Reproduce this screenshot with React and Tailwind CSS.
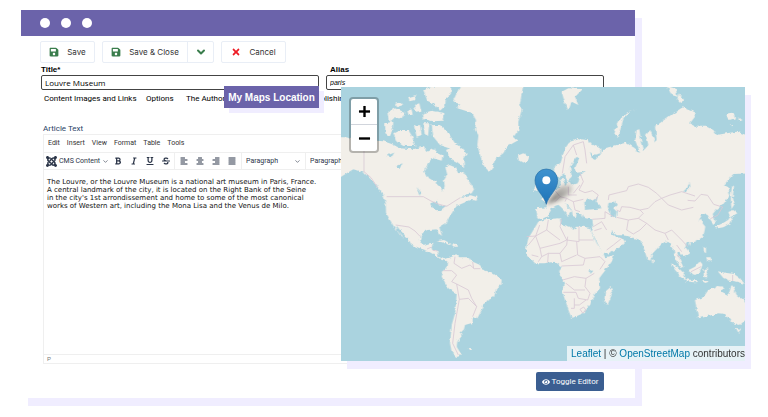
import React, { useState } from 'react';
import {
  FaSave,
  FaTimes,
  FaEye,
  FaBold,
  FaItalic,
  FaUnderline,
  FaStrikethrough,
  FaAlignLeft,
  FaAlignCenter,
  FaAlignRight,
  FaAlignJustify,
} from 'react-icons/fa';
import { SiJoomla } from 'react-icons/si';
import { ChevronDown, Plus, Minus } from 'lucide-react';

const menus = ['Edit', 'Insert', 'View', 'Format', 'Table', 'Tools'];

const formatButtons = [
  { label: 'Bold', Icon: FaBold },
  { label: 'Italic', Icon: FaItalic },
  { label: 'Underline', Icon: FaUnderline },
  { label: 'Strikethrough', Icon: FaStrikethrough },
];

const alignButtons = [
  { label: 'Align left', Icon: FaAlignLeft },
  { label: 'Align center', Icon: FaAlignCenter },
  { label: 'Align right', Icon: FaAlignRight },
  { label: 'Justify', Icon: FaAlignJustify },
];

const WorldMap = () => (
  <svg
    className="block w-full h-full"
    viewBox="0 0 1212 822"
    preserveAspectRatio="xMidYMid slice"
    role="img"
    aria-label="World map"
  >
    <defs>
      <filter id="coast" x="-5%" y="-5%" width="110%" height="110%">
        <feTurbulence type="fractalNoise" baseFrequency="0.08" numOctaves="2" seed="4" result="noise" />
        <feDisplacementMap in="SourceGraphic" in2="noise" scale="11" xChannelSelector="R" yChannelSelector="G" />
      </filter>
      <filter id="soft" x="-50%" y="-50%" width="200%" height="200%">
        <feGaussianBlur stdDeviation="6" />
      </filter>
      <linearGradient id="pin" x1="0" y1="0" x2="0" y2="1">
        <stop offset="0" stopColor="#3f93cf" />
        <stop offset="1" stopColor="#1f74b8" />
      </linearGradient>
      <linearGradient id="pinShadow" x1="0" y1="1" x2="1" y2="0">
        <stop offset="0" stopColor="#000" stopOpacity="0.55" />
        <stop offset="1" stopColor="#000" stopOpacity="0.1" />
      </linearGradient>
    </defs>
    <rect width="1212" height="822" fill="#aad3df" />

    <g filter="url(#coast)" fill="#f2efe9" strokeLinejoin="round">
      {/* North America, Greenland, Iceland */}
      <g transform="translate(-3 -21)">
        <path d="M-20 172L20 172 45 182 75 188 110 182 130 184 155 192 180 205 215 208 250 200 262 215 285 205 290 225 275 240 262 255 252 272 262 292 285 305 300 318 308 335 314 318 312 300 322 285 316 262 328 255 345 262 355 280 372 275 380 295 395 315 402 328 395 340 375 345 360 352 392 346 412 352 410 362 392 360 372 368 350 378 340 392 328 412 318 430 298 442 306 468 298 462 290 448 262 450 245 458 240 480 250 495 268 490 280 488 274 502 277 510 292 512 296 530 312 538 328 534 325 544 305 540 285 526 262 512 240 505 215 495 205 478 180 450 168 435 172 452 192 476 185 472 162 440 150 420 138 398 137 370 130 345 112 320 95 300 72 278 40 268 20 280 -20 305Z" />
        <path d="M362 15L345 50 338 65 360 72 352 85 395 98 408 120 405 150 415 165 412 195 420 225 432 258 448 276 458 262 465 238 490 220 500 200 532 182 520 172 535 150 535 125 545 90 540 70 550 15Z" />
        <path d="M530 228L550 220 568 228 565 242 548 248 534 240Z" />
        <path d="M275 135L300 135 325 160 345 190 365 205 380 222 370 235 372 262 350 245 330 235 318 210 330 205 300 195 280 170Z" />
        <path d="M135 130L160 125 158 150 148 168 136 160Z" />
        <path d="M160 160L180 150 205 150 218 172 225 198 190 198 170 185Z" />
        <path d="M145 95L165 85 195 100 185 118 165 112 150 125Z" />
        <path d="M165 72L182 65 190 76 172 82ZM205 52L228 45 225 60 208 64ZM222 76L238 70 244 95 230 98ZM202 92L215 88 218 104 206 106Z" />
        <path d="M250 30L275 20 335 15 332 42 318 55 315 78 300 92 282 72 262 62Z" />
        <path d="M248 100L275 92 310 98 308 122 280 124 252 118Z" />
        <path d="M222 138L240 135 245 165 230 170ZM250 130L268 130 264 168 254 162ZM286 216L308 226 305 242 284 236Z" />
      </g>

      {/* South America and the Caribbean */}
      <g transform="translate(-3 369)">
        <path d="M322 146L345 136 358 142 385 142 392 152 420 165 425 178 455 188 485 206 484 222 468 238 462 262 435 275 428 295 412 325 398 322 398 338 375 345 372 358 362 368 365 378 352 395 350 410 365 435 352 441 335 425 330 400 335 345 345 310 350 252 325 235 305 200 310 182 320 170Z" />
        <path d="M290 94L312 90 334 102 328 105 306 97ZM336 103L354 106 350 111 338 109ZM385 415L396 414 394 420 386 420Z" />
      </g>

      {/* Europe and Asia */}
      <g transform="translate(597 -21)">
        <path d="M42 262L62 248 75 205 90 185 120 175 145 178 150 190 180 205 182 220 160 225 150 215 155 235 165 240 180 225 195 205 230 195 258 188 285 205 290 215 300 218 285 180 290 150 298 148 302 175 312 210 325 195 318 165 330 150 345 185 350 180 345 140 365 125 400 100 428 82 462 95 465 110 450 130 470 140 500 140 520 150 530 165 560 160 590 155 640 170 640 280 580 282 552 315 565 322 570 345 548 375 528 390 518 402 527 425 520 432 508 415 500 400 486 405 478 418 496 440 490 470 465 485 440 490 435 500 447 515 445 525 430 532 418 515 412 520 420 540 430 562 424 564 405 530 400 505 385 485 375 485 362 495 338 520 330 542 322 538 308 495 300 480 285 475 262 468 245 466 230 466 212 450 215 460 228 470 250 478 255 485 240 502 205 520 190 522 180 505 165 475 155 455 160 440 157 418 130 414 124 400 110 398 108 412 98 408 95 390 85 378 75 368 80 378 96 394 88 398 84 412 80 398 62 380 55 374 45 382 35 386 23 408 5 418 -8 412 -12 385 20 382 17 365 3 358 10 353 20 348 45 330 60 320 64 298 72 298 75 318 84 310 78 292 70 280 60 292 44 286Z" />
        <path d="M-15 315L-10 312 -8 332 -18 336ZM5 280L18 282 14 300 26 325 22 342 4 346 8 320Z" />
        <path d="M65 35L85 25 128 28 105 50 115 75 95 65 85 92 72 60ZM290 88L270 95 250 118 242 145 236 172 223 162 233 125 260 98ZM380 18L408 26 412 50 395 45ZM416 40L432 60 420 66 412 56ZM556 105L580 100 585 115 568 120ZM590 112L608 120 600 124ZM570 135L582 136 578 142Z" />
        <path d="M576 318L582 322 578 352 584 372 574 388 572 350ZM565 396L580 390 592 400 578 408 570 412ZM570 412L578 415 572 430 550 442 534 445 530 438 548 430 564 420ZM524 438L532 438 530 448Z" />
      </g>

      {/* Africa, Oceania */}
      <g transform="translate(597 369)">
        <path d="M-5 35L15 28 60 25 63 42 90 50 100 60 108 50 130 50 150 54 155 68 170 100 190 130 195 142 222 135 215 155 185 195 178 205 180 235 162 255 150 285 130 310 95 325 85 300 68 245 75 220 60 195 58 180 65 170 45 155 10 160 -15 160 -43 130 -40 105 -35 85 -20 60Z" />
        <path d="M213 230L217 250 203 284 193 280 195 245ZM334 146L342 154 336 160Z" />
        <path d="M393 160L410 168 430 188 438 208 425 202 405 180ZM436 208L458 210 478 216 460 217 438 214ZM484 212L510 214 496 219ZM446 180L465 170 478 155 487 165 480 187 465 195 450 190ZM490 178L508 175 496 186 504 202 492 202ZM490 108L498 112 498 130 492 126ZM498 142L512 142 514 155 502 153ZM446 96L454 94 450 108Z" />
        <path d="M533 184L555 188 582 192 600 205 614 222 590 215 570 212 550 204Z" />
        <path d="M465 270L490 262 505 240 525 235 530 228 550 230 545 245 565 255 576 222 590 255 612 270 625 290 622 325 600 345 575 338 555 312 535 310 505 318 475 325 470 300ZM587 354L603 356 595 372Z" />
      </g>

      {/* inland seas */}
      <g fill="#aad3df" transform="translate(492 129)">
        <path d="M238 215L250 203 262 212 275 203 272 215 290 235 265 238 240 240Z" />
        <path d="M312 215L330 215 335 225 325 235 335 245 332 264 318 262 315 245 308 230Z" />
        <path d="M200 165L190 150 200 140 195 110 215 80 222 85 210 115 215 128 240 125 225 135 218 160 195 168Z" />
        <path d="M534 185L548 172 554 155 556 170 542 186ZM254 420L264 424 256 432Z" />
      </g>
      <g fill="#aad3df" transform="translate(-3 -21)">
        <path d="M138 228L162 218 155 232ZM168 258L188 250 180 264ZM230 322L242 335 240 348ZM268 370L290 362 298 380 320 376 300 392 282 388Z" />
      </g>
    </g>

    {/* country borders */}
    <g fill="none" stroke="#d9c9d5" strokeWidth="2.5" strokeLinejoin="round">
      <path d="M69 164V254L90 272 110 302M137 329H247L270 342 288 350 317 358 345 340 358 332M164 414L204 420 222 432 237 448M258 486L272 480M275 490L290 492" />
      <path d="M342 509L339 529 362 544 387 534M307 551L332 551 347 564 332 584 347 591 382 609 392 634 407 659 395 689M347 591L355 637 342 709 335 769 352 804M355 637L382 634 407 659M387 534L400 545 418 545M395 525L398 545" />
      <g transform="translate(492 129)">
        <path d="M172 130L180 80 205 45 235 35 240 60 245 100M205 45L215 75M225 130L235 155 222 180 240 188 262 182 280 195 272 210M190 170V195L215 195M150 182L165 200 185 205 205 215 235 208M205 190L225 165M185 205L180 215M205 215L210 240 225 245M165 200L150 215" />
        <path d="M310 210L312 195 340 188 365 182 370 170 400 162 430 172 455 190 470 205 450 215 430 235 405 240 375 232 350 230 345 245 335 240M470 205L495 195 530 185 570 198M470 205L490 225 530 240 565 232M300 245L325 260M262 268L300 265 300 245M335 262L370 270 400 265 415 250 405 240M370 270L365 300 385 312M400 265L425 280 405 300 385 312M425 280L450 300 480 310 500 300M480 310L490 330M500 300L515 315 530 330 548 350M515 345L530 365M265 290L290 275 305 300M268 302L290 295M305 360L325 345 350 325M104 285L92 318 65 320M130 270L125 300 165 330M125 300L92 318 105 355 165 340 185 330 165 290 170 268M185 330L222 335V290M222 330H265M92 318L70 345" />
        <path d="M105 355L110 380 130 370 165 370 185 345 188 320M215 335L218 375 240 385 285 380M165 370L170 395 215 375M240 385L235 405 170 408M285 380L300 395 285 418M130 370L128 398M110 380L100 395M80 375L100 380" />
      </g>
      <path d="M665 579L700 569 735 574 760 559M735 574L732 599 747 619 740 639M675 589L700 609 732 609M667 616H705L712 634 740 639M690 664H700V634M700 654L715 654 735 639M717 667L728 660 735 670 725 678ZM1007 504L1020 514M1050 554L1080 539M1175 564V582" />
      <path d="M1040 340L1062 342 1080 322 1100 325 1118 352 1145 360 1130 385 1108 395" />
    </g>

    {/* marker */}
    <path d="M616 352L646 310Q664 288 690 292Q700 304 684 322Q660 340 616 352Z" fill="url(#pinShadow)" filter="url(#soft)" />
    <path d="M616 352C610 326 582 310 582 280A34 34 0 0 1 650 280C650 310 622 326 616 352Z" fill="url(#pin)" stroke="#2a6fa5" strokeWidth="2" />
    <circle cx="616" cy="280" r="12" fill="#fff" />
  </svg>
);

const MapPanel = () => (
  <div className="absolute top-[77px] left-[320px] -right-[110px] h-[274px] bg-[#aad3df] shadow-[6px_8px_0_#f0edff]">
    <WorldMap />
    <div className="absolute top-[10px] left-2 flex flex-col rounded-sm border-2 border-black/25 bg-clip-padding bg-white">
      <button className="w-[26px] h-[26px] flex items-center justify-center border-b border-gray-300" aria-label="Zoom in">
        <Plus size={19} strokeWidth={3} strokeLinecap="butt" />
      </button>
      <button className="w-[26px] h-[26px] flex items-center justify-center" aria-label="Zoom out">
        <Minus size={19} strokeWidth={3} strokeLinecap="butt" />
      </button>
    </div>
    <div className="absolute right-0 bottom-0 h-[15px] pl-1 bg-white/70 text-[10px] leading-[15px] text-[#333] whitespace-nowrap">
      <a href="#leaflet" className="text-[#0078a8]">Leaflet</a> | ©{' '}
      <a href="#osm" className="text-[#0078a8]">OpenStreetMap</a> contributors
    </div>
  </div>
);

const ToolButton = ({ label, Icon }) => (
  <button className="w-4 h-4 flex items-center justify-center" aria-label={label}>
    <Icon size={8} />
  </button>
);

const App = () => {
  const [title, setTitle] = useState('Louvre Museum');
  const [alias, setAlias] = useState('paris');

  return (
    <div className="min-h-screen bg-white pt-[10px] pl-[21px] pr-[133px] overflow-hidden font-['Liberation_Sans',sans-serif] text-black">
      <main className="relative bg-white shadow-[7px_8px_0_#f0edff] pb-[7px]">
        <div className="h-[26px] bg-[#6b63aa] flex items-center gap-[11px] pl-[19px]">
          <span className="w-[10px] h-[10px] rounded-full bg-white" />
          <span className="w-[10px] h-[10px] rounded-full bg-white" />
          <span className="w-[10px] h-[10px] rounded-full bg-white" />
        </div>

        <div className="pl-5 pr-[31px]">
          {/* Toolbar */}
          <div className="flex gap-[7px] pt-[5px] -ml-px font-[Inter,sans-serif] text-[8px] text-[#333]">
            <button className="h-[22px] w-[55px] flex items-center justify-center gap-2 border border-[#e9eef6] rounded-xs">
              <FaSave size={10} className="text-[#3a7d4c]" />
              Save
            </button>
            <div className="flex border border-[#e9eef6] rounded-xs">
              <button className="h-5 w-[84px] flex items-center justify-center gap-2">
                <FaSave size={10} className="text-[#3a7d4c]" />
                Save &amp; Close
              </button>
              <button className="w-[26px] flex items-center justify-center border-l border-[#e9eef6]" aria-label="More save options">
                <ChevronDown size={12} strokeWidth={4} className="text-[#3a7d4c]" />
              </button>
            </div>
            <button className="h-[22px] w-[65px] flex items-center justify-center gap-2 border border-[#e9eef6] rounded-xs">
              <FaTimes size={10} className="text-[#ee1c25]" />
              Cancel
            </button>
          </div>

          {/* Title and alias */}
          <div className="grid grid-cols-2 gap-[7px] pt-px">
            <div>
              <label htmlFor="title" className="block font-bold text-[8px] leading-[11px]">Title*</label>
              <input
                id="title"
                className="block w-full h-[15px] px-[3px] border border-[#444] rounded-xs font-['Open_Sans',sans-serif] text-[8px] leading-[13px] focus:outline-none"
                value={title}
                onChange={(e) => setTitle(e.target.value)}
              />
            </div>
            <div>
              <label htmlFor="alias" className="block pl-1 font-bold text-[8px] leading-[11px]">Alias</label>
              <input
                id="alias"
                className="block w-full h-[15px] px-[3px] border border-[#444] rounded-xs italic text-[7px] leading-[13px] focus:outline-none"
                value={alias}
                onChange={(e) => setAlias(e.target.value)}
              />
            </div>
          </div>

          {/* Tabs */}
          <nav className="relative flex h-[18px] items-center pl-[3px] font-[Roboto,sans-serif] text-[8px] whitespace-nowrap">
            <a href="#content" className="w-[30px]">Content</a>
            <a href="#images" className="w-[72px]">Images and Links</a>
            <a href="#options" className="w-10">Options</a>
            <a href="#author" className="w-[125px]">The Author</a>
            <a href="#publishing">Publishing</a>
            <a
              href="#location"
              className="absolute left-[183px] -top-1 w-[95px] h-[22px] flex items-center justify-center bg-[#6b63aa] text-white font-['Liberation_Sans',sans-serif] font-bold text-[10px] shadow-[5px_5px_0_#f0edff]"
            >
              My Maps Location
            </a>
          </nav>

          {/* Editor */}
          <label htmlFor="article" className="block pt-4 pl-[2px] font-[Roboto,sans-serif] text-[8px] leading-[10px] text-[#2a3f66]">
            Article Text
          </label>
          <div className="ml-[2px] border border-[#efefef]">
            <div className="h-[17px] flex items-center gap-[7px] px-1 font-[Roboto,sans-serif] text-[7px] text-[#333]">
              {menus.map((menu) => (
                <button key={menu}>{menu}</button>
              ))}
            </div>
            <div className="h-[18px] flex items-stretch border-y border-[#efefef] font-[Roboto,sans-serif] text-[7px] text-[#2b3548]">
              <button className="w-[66px] flex items-center gap-[2px] pl-[2px] whitespace-nowrap">
                <SiJoomla size={11} />
                CMS Content
                <ChevronDown size={7} />
              </button>
              <div className="flex items-center border-r border-[#efefef]">
                {formatButtons.map((button) => (
                  <ToolButton key={button.label} {...button} />
                ))}
              </div>
              <div className="flex items-center px-px border-r border-[#efefef]">
                {alignButtons.map((button) => (
                  <ToolButton key={button.label} {...button} />
                ))}
              </div>
              <div className="relative w-16 flex items-center border-r border-[#efefef]">
                <select aria-label="Block format" className="w-full pl-1 appearance-none bg-transparent">
                  <option>Paragraph</option>
                </select>
                <ChevronDown size={7} className="absolute right-1 pointer-events-none" />
              </div>
              <div className="w-16 flex items-center">
                <select aria-label="Text style" className="w-full pl-1 appearance-none bg-transparent">
                  <option>Paragraph</option>
                </select>
              </div>
            </div>
            <textarea
              id="article"
              className="block w-full h-[184px] pt-2 px-[3px] resize-none font-['DejaVu_Sans',sans-serif] text-[7px] leading-[8px] text-[#111] focus:outline-none"
              defaultValue={
                'The Louvre, or the Louvre Museum is a national art museum in Paris, France.\n' +
                'A central landmark of the city, it is located on the Right Bank of the Seine\n' +
                'in the city\'s 1st arrondissement and home to some of the most canonical\n' +
                'works of Western art, including the Mona Lisa and the Venus de Milo.'
              }
            />
            <div className="h-[9px] px-[3px] border-t border-[#efefef] text-[6px] leading-[8px] text-[#777]">P</div>
          </div>

          <div className="flex justify-end pt-2">
            <button className="w-[68px] h-[19px] flex items-center justify-center gap-[2px] rounded-xs bg-[#3b5e91] text-white font-[Roboto,sans-serif] text-[8px]">
              <FaEye size={8} />
              Toggle Editor
            </button>
          </div>
        </div>

        <MapPanel />
      </main>
    </div>
  );
};

export default App;
